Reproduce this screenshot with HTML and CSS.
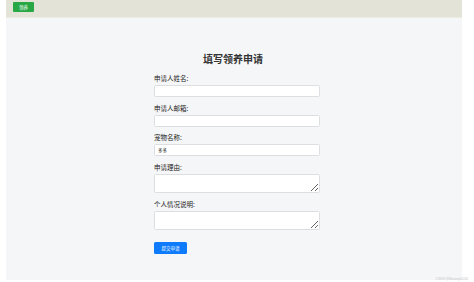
FILE: index.html
```html
<!DOCTYPE html>
<html lang="zh-CN">
<head>
  <meta charset="UTF-8" />
  <title>填写领养申请</title>
  <link rel="stylesheet" href="styles.css">
</head>
<body>
  <div class="page">
    <div class="topbar">
      <button class="btn-adopt">领养</button>
    </div>

    <div class="form-wrap">
      <form class="apply-form">
        <h1>填写领养申请</h1>

        <label for="name">申请人姓名:</label>
        <input id="name" type="text" />

        <label for="email">申请人邮箱:</label>
        <input id="email" type="email" />

        <label for="pet">宠物名称:</label>
        <input id="pet" type="text" value="多多" />

        <label for="reason">申请理由:</label>
        <textarea id="reason"></textarea>

        <label for="info">个人情况说明:</label>
        <textarea id="info"></textarea>

        <div class="actions">
          <button type="submit" class="btn-submit">提交申请</button>
        </div>
      </form>
    </div>
  </div>

  <div class="watermark">CSDN @Weisonye1026</div>
</body>
</html>
```

FILE: styles.css
```css
* {
  margin: 0;
  padding: 0;
  box-sizing: border-box;
}

html, body {
  height: 100%;
  background: #fff;
  font-family: "Noto Sans CJK SC", "Noto Sans", sans-serif;
  color: #333;
}

body {
  position: relative;
  padding: 0 12px 2px 6px;
}

.page {
  height: 100%;
  background: #f5f6f8;
}

.topbar {
  height: 18px;
  background: #e3e3d7;
  border-bottom: 1px solid #ecece2;
  padding: 2px 7px;
}

.btn-adopt {
  display: block;
  width: 21px;
  height: 10px;
  background: #28a745;
  color: #fff;
  border: none;
  border-radius: 1px;
  font-family: inherit;
  font-size: 4.5px;
  line-height: 10px;
}

.form-wrap {
  padding-left: 6px;
  padding-top: 35px;
}

.apply-form {
  width: 166px;
  margin: 0 auto;
  display: flex;
  flex-direction: column;
}

h1 {
  font-size: 10px;
  line-height: 12px;
  font-weight: 700;
  text-align: center;
  color: #333;
  margin-left: -8px;
  margin-bottom: 9px;
}

label {
  font-size: 6.5px;
  line-height: 8px;
  margin-bottom: 3px;
  color: #222;
}

input, textarea {
  display: block;
  width: 100%;
  background: #fff;
  border: 1px solid #dcdee1;
  border-radius: 1.5px;
  font-family: inherit;
  font-size: 4.5px;
  color: #333;
  padding: 0 3px;
}

input {
  height: 12px;
  margin-bottom: 6.5px;
}

textarea {
  height: 19px;
  margin-bottom: 7px;
  resize: vertical;
}

.actions {
  display: flex;
  margin-top: 5px;
}

.btn-submit {
  width: 33px;
  height: 12px;
  background: #0d7bfb;
  color: #fff;
  border: none;
  border-radius: 1.5px;
  font-family: inherit;
  font-size: 4.5px;
  line-height: 12px;
}

.watermark {
  position: absolute;
  right: 6px;
  bottom: 1px;
  font-family: "Liberation Sans", sans-serif;
  font-size: 3px;
  color: #c4c4c4;
}
```
